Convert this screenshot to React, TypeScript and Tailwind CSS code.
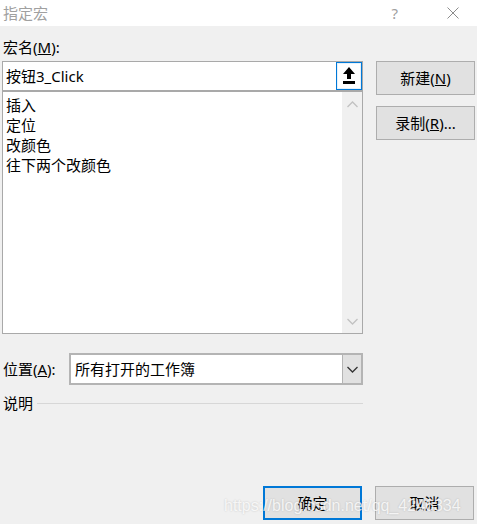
const items = ['插入', '定位', '改颜色', '往下两个改颜色'];

function UpArrowIcon() {
  return (
    <svg width="12" height="18" viewBox="0 0 12 18" fill="#000">
      <polygon points="6,0 12,7 8,7 8,12 4,12 4,7 0,7" />
      <rect x="0" y="14" width="12" height="3" />
    </svg>
  );
}

function Chevron({ dir, color }: { dir: 'up' | 'down'; color: string }) {
  return (
    <svg width="11" height="7" viewBox="0 0 11 7" fill="none" stroke={color} strokeWidth="1.3">
      {dir === 'up' ? <polyline points="0.5,6 5.5,1 10.5,6" /> : <polyline points="0.5,1 5.5,6 10.5,1" />}
    </svg>
  );
}

function SideButton({ children, primary }: { children: React.ReactNode; primary?: boolean }) {
  return (
    <button
      className={
        'w-[99px] h-[34px] bg-[#e1e1e1] text-[15px] text-black flex items-center justify-center ' +
        (primary ? 'border-2 border-[#0078d7]' : 'border border-[#adadad]')
      }
    >
      {children}
    </button>
  );
}

export default function App() {
  return (
    <div className="relative w-[477px] h-[524px] bg-[#f0f0f0] overflow-hidden font-['Noto_Sans','Noto_Sans_CJK_SC',sans-serif] text-black">
      {/* title bar */}
      <div className="h-[26px] bg-white flex items-center pl-[3px] pr-[18px]">
        <span className="text-[15px] leading-none text-[#a0a0a0] flex-1">指定宏</span>
        <span className="text-[15px] leading-none text-[#a0a0a0] mr-[49px]">?</span>
        <svg width="12" height="12" viewBox="0 0 12 12" stroke="#8c8c8c" strokeWidth="1">
          <line x1="0.5" y1="0.5" x2="11.5" y2="11.5" />
          <line x1="11.5" y1="0.5" x2="0.5" y2="11.5" />
        </svg>
      </div>

      <div className="pl-[2px] flex gap-[13px]">
        {/* left column */}
        <div className="w-[361px] flex flex-col">
          <div className="h-[35px] pt-[11px] pl-[1px] text-[15px] leading-[20px]">
            宏名(<span className="underline">M</span>):
          </div>
          <div className="h-[30px] bg-white border border-[#a9a9a9] flex items-center">
            <span className="flex-1 pl-[3px] text-[15px] leading-none">按钮3_Click</span>
            <button className="w-[26px] h-[28px] border border-[#0078d7] bg-[#e5f1fb] flex items-center justify-center">
              <span className="w-[22px] h-[24px] bg-white flex items-center justify-center">
                <UpArrowIcon />
              </span>
            </button>
          </div>
          <div className="h-[243px] bg-white border border-[#a9a9a9] flex">
            <div className="flex-1 pt-[3px] pl-[3px] text-[15px] leading-[20px]">
              {items.map((item) => (
                <div key={item}>{item}</div>
              ))}
            </div>
            <div className="w-[20px] bg-[#f0f0f0] flex flex-col items-center justify-between pt-[9px] pb-[8px]">
              <Chevron dir="up" color="#c2c2c2" />
              <Chevron dir="down" color="#c2c2c2" />
            </div>
          </div>

          <div className="mt-[19px] flex items-center">
            <span className="w-[67px] pl-[1px] text-[15px]">
              位置(<span className="underline">A</span>):
            </span>
            <div className="flex-1 h-[32px] bg-white border-2 border-[#b4b4b4] flex">
              <span className="flex-1 pl-[4px] text-[15px] leading-[28px]">所有打开的工作簿</span>
              <div className="w-[19px] bg-[#e1e1e1] border-l border-[#b4b4b4] flex items-center justify-center">
                <Chevron dir="down" color="#333" />
              </div>
            </div>
          </div>

          <div className="mt-[8px] flex items-center">
            <span className="pl-[1px] text-[15px] leading-[20px]">说明</span>
            <div className="flex-1 ml-[4px] h-px bg-[#d7d7d7]" />
          </div>
        </div>

        {/* right column */}
        <div className="pt-[35px] flex flex-col gap-[11px]">
          <SideButton>
            新建(<span className="underline">N</span>)
          </SideButton>
          <SideButton>
            录制(<span className="underline">R</span>)...
          </SideButton>
        </div>
      </div>

      {/* dialog buttons */}
      <div className="absolute left-0 right-0 bottom-[4px] flex justify-end gap-[13px] pr-[3px]">
        <SideButton primary>确定</SideButton>
        <SideButton>取消</SideButton>
      </div>

      {/* watermark */}
      <div className="absolute left-[224px] top-[494px] font-['Liberation_Sans',sans-serif] text-[16px] text-white/80 [text-shadow:0_0_2px_rgba(0,0,0,0.2)] pointer-events-none whitespace-nowrap">
        https://blog.csdn.net/qq_4246334
      </div>
    </div>
  );
}
